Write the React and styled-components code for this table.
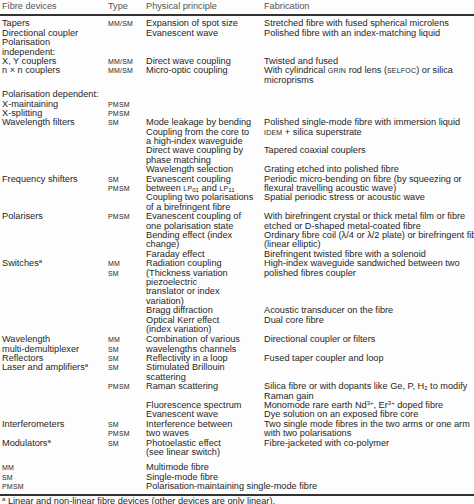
import styled, { createGlobalStyle } from 'styled-components'

const Global = createGlobalStyle`
  html, body {
    margin: 0;
    padding: 0;
    background: #fdfdfd;
  }
  body {
    font-family: "Liberation Sans", Arial, sans-serif;
    color: #262626;
  }
`;

const Page = styled.div`
    width: 474px;
    height: 504px;
    overflow: hidden;
    padding-top: 2px;
    box-sizing: border-box;
`;

const Row = styled.div`
    display: grid;
    grid-template-columns: 106px 38px 118px 1fr;
    padding-left: 2px;
    margin-top: ${p => p.$gap || 0}px;
`;

const HeadRow = styled(Row)`
    color: #555;
    padding-bottom: 3px;
    border-bottom: 2px solid #333;
    margin-bottom: 3px;
`;

const Cell = styled.div`
    font-size: 9.2px;
`;

const TypeCell = styled(Cell)`
    font-size: 7px;
    letter-spacing: 0.2px;
`;

const Line = styled.div`
    height: 9.4px;
    line-height: 9.4px;
    white-space: nowrap;
`;

const Sc = styled.span`
    font-size: 7px;
    letter-spacing: 0.2px;
`;

const Sub = styled.sub`
    font-size: 6px;
    vertical-align: -1px;
    line-height: 0;
`;

const Sup = styled.sup`
    font-size: 6px;
    vertical-align: 3px;
    line-height: 0;
`;

const Foot = styled.div`
    border-top: 2px solid #333;
    margin-top: 2px;
    padding: 0 0 0 2px;
    font-size: 9.2px;
    line-height: 10px;
    white-space: nowrap;
`;

const rows = [
  { dev: ['Tapers'], type: ['MM/SM'], phys: ['Expansion of spot size'], fab: ['Stretched fibre with fused spherical microlens'] },
  { dev: ['Directional coupler'], phys: ['Evanescent wave'], fab: ['Polished fibre with an index-matching liquid'] },
  { dev: ['Polarisation', 'independent:'] },
  { dev: ['X, Y couplers'], type: ['MM/SM'], phys: ['Direct wave coupling'], fab: ['Twisted and fused'] },
  {
    dev: ['n × n couplers'], type: ['MM/SM'], phys: ['Micro-optic coupling'],
    fab: [<>With cylindrical <Sc>GRIN</Sc> rod lens (<Sc>SELFOC</Sc>) or silica</>, 'microprisms'],
  },
  { dev: ['Polarisation dependent:'], gap: 5 },
  { dev: ['X-maintaining'], type: ['PMSM'] },
  { dev: ['X-splitting'], type: ['PMSM'] },
  {
    dev: ['Wavelength filters'], type: ['SM'],
    phys: ['Mode leakage by bending', 'Coupling from the core to', 'a high-index waveguide', 'Direct wave coupling by', 'phase matching', 'Wavelength selection'],
    fab: ['Polished single-mode fibre with immersion liquid', <><Sc>IDEM</Sc> + silica superstrate</>, '', 'Tapered coaxial couplers', '', 'Grating etched into polished fibre'],
  },
  {
    dev: ['Frequency shifters'], type: ['SM', 'PMSM'],
    phys: ['Evanescent coupling', <>between <Sc>LP</Sc><Sub>01</Sub> and <Sc>LP</Sc><Sub>11</Sub></>, 'Coupling two polarisations', 'of a birefringent fibre'],
    fab: ['Periodic micro-bending on fibre (by squeezing or', 'flexural travelling acoustic wave)', 'Spatial periodic stress or acoustic wave'],
  },
  {
    dev: ['Polarisers'], type: ['PMSM'],
    phys: ['Evanescent coupling of', 'one polarisation state', 'Bending effect (index', 'change)', 'Faraday effect'],
    fab: ['With birefringent crystal or thick metal film or fibre', 'etched or D-shaped metal-coated fibre', 'Ordinary fibre coil (λ/4 or λ/2 plate) or birefringent fibre', '(linear elliptic)', 'Birefringent twisted fibre with a solenoid'],
  },
  {
    dev: [<>Switches<Sup>a</Sup></>], type: ['MM', 'SM'],
    phys: ['Radiation coupling', '(Thickness variation', 'piezoelectric', 'translator or index', 'variation)', 'Bragg diffraction', 'Optical Kerr effect', '(index variation)'],
    fab: ['High-index waveguide sandwiched between two', 'polished fibres coupler', '', '', '', 'Acoustic transducer on the fibre', 'Dual core fibre'],
  },
  {
    dev: ['Wavelength', 'multi-demultiplexer'], type: ['MM', 'SM'], gap: 1,
    phys: ['Combination of various', 'wavelengths channels'], fab: ['Directional coupler or filters'],
  },
  { dev: ['Reflectors'], type: ['SM'], phys: ['Reflectivity in a loop'], fab: ['Fused taper coupler and loop'] },
  {
    dev: [<>Laser and amplifiers<Sup>a</Sup></>], type: ['SM', '', 'PMSM'],
    phys: ['Stimulated Brillouin', 'scattering', 'Raman scattering', '', 'Fluorescence spectrum', 'Evanescent wave'],
    fab: ['', '', <>Silica fibre or with dopants like Ge, P, H<Sub>2</Sub> to modify</>, 'Raman gain', <>Monomode rare earth Nd<Sup>3+</Sup>, Er<Sup>3+</Sup> doped fibre</>, 'Dye solution on an exposed fibre core'],
  },
  {
    dev: ['Interferometers'], type: ['SM', 'PMSM'],
    phys: ['Interference between', 'two waves'],
    fab: ['Two single mode fibres in the two arms or one arm', 'with two polarisations'],
  },
  {
    dev: [<>Modulators<Sup>a</Sup></>], type: ['SM'],
    phys: ['Photoelastic effect', '(see linear switch)'], fab: ['Fibre-jacketed with co-polymer'],
  },
];

const legend = [
  ['MM', 'Multimode fibre'],
  ['SM', 'Single-mode fibre'],
  ['PMSM', 'Polarisation-maintaining single-mode fibre'],
];

const Lines = ({ items = [] }) =>
  items.map((t, i) => <Line key={i}>{t === '' ? '\u00a0' : t}</Line>);

export default function App() {
  return (
    <Page>
      <Global />
      <HeadRow>
        <Cell><Line>Fibre devices</Line></Cell>
        <Cell><Line>Type</Line></Cell>
        <Cell><Line>Physical principle</Line></Cell>
        <Cell><Line>Fabrication</Line></Cell>
      </HeadRow>
      {rows.map((r, i) => (
        <Row key={i} $gap={r.gap}>
          <Cell><Lines items={r.dev} /></Cell>
          <TypeCell><Lines items={r.type} /></TypeCell>
          <Cell><Lines items={r.phys} /></Cell>
          <Cell><Lines items={r.fab} /></Cell>
        </Row>
      ))}
      {legend.map(([k, v], i) => (
        <Row key={k} $gap={i === 0 ? 6 : 0}>
          <TypeCell><Line>{k}</Line></TypeCell>
          <Cell />
          <Cell><Line>{v}</Line></Cell>
          <Cell />
        </Row>
      ))}
      <Foot><Sup>a</Sup> Linear and non-linear fibre devices (other devices are only linear).</Foot>
    </Page>
  )
}
